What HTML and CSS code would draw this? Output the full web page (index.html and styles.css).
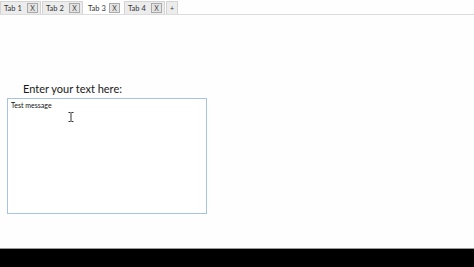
FILE: index.html
```html
<!DOCTYPE html>
<html>
<head>
<meta charset="utf-8">
<link rel="stylesheet" href="styles.css">
</head>
<body>
<div class="window">
  <div class="tabbar">
    <div class="tab"><span class="tab-label">Tab 1</span><span class="close">X</span></div>
    <div class="tab"><span class="tab-label">Tab 2</span><span class="close">X</span></div>
    <div class="tab active"><span class="tab-label">Tab 3</span><span class="close">X</span></div>
    <div class="tab"><span class="tab-label">Tab 4</span><span class="close">X</span></div>
    <div class="add">+</div>
  </div>
  <div class="content">
    <div class="prompt">Enter your text here:</div>
    <div class="editor">
      <div class="editor-text">Test message</div>
      <svg class="ibeam" width="6" height="10" viewBox="0 0 6 10"><path d="M0.5 0.5h2M3.5 0.5h2M3 0.5v9M0.5 9.5h2M3.5 9.5h2" stroke="#333" stroke-width="1" fill="none"/></svg>
    </div>
  </div>
</div>
<div class="taskbar"></div>
</body>
</html>
```
FILE: styles.css
```css
html, body {
  margin: 0;
  padding: 0;
  background: #fdfefd;
  font-family: "Lato", "Noto Sans", sans-serif;
}
.window {
  height: 249px;
  display: flex;
  flex-direction: column;
  border-bottom: 1px solid #9a9a9a;
  box-sizing: border-box;
}
.tabbar {
  height: 15px;
  display: flex;
  align-items: stretch;
  gap: 1px;
  border-bottom: 1px solid #dcdcdc;
  box-sizing: border-box;
  padding-top: 1px;
}
.tab {
  width: 41px;
  box-sizing: border-box;
  display: flex;
  align-items: center;
  justify-content: space-between;
  padding: 0 2px 0 3px;
  background: #ececec;
  border: 1px solid #d4d4d4;
  border-bottom: none;
  font-size: 7.5px;
  color: #333;
}
.tab.active {
  width: 39px;
  background: #fdfefd;
  border-color: #fdfefd;
}
.close {
  width: 11px;
  height: 10px;
  box-sizing: border-box;
  border: 1px solid #a9a9a9;
  background: #e4e4e4;
  display: flex;
  align-items: center;
  justify-content: center;
  font-size: 7px;
  color: #444;
  line-height: 1;
}
.add {
  width: 12px;
  box-sizing: border-box;
  display: flex;
  align-items: center;
  justify-content: center;
  background: #ececec;
  border: 1px solid #d4d4d4;
  border-bottom: none;
  font-size: 7px;
  color: #333;
}
.content {
  padding: 66px 0 0 7px;
}
.prompt {
  font-size: 11px;
  color: #1a1a1a;
  padding-left: 16px;
  line-height: 16px;
  margin-bottom: 1px;
}
.editor {
  position: relative;
  width: 198px;
  height: 114px;
  border: 1px solid #a7c3e4;
  background: #fff;
}
.editor-text {
  font-size: 7px;
  color: #111;
  padding: 2px 0 0 3px;
}
.ibeam {
  position: absolute;
  left: 60px;
  top: 13px;
}
.taskbar {
  height: 18px;
  background: #000;
}
```
